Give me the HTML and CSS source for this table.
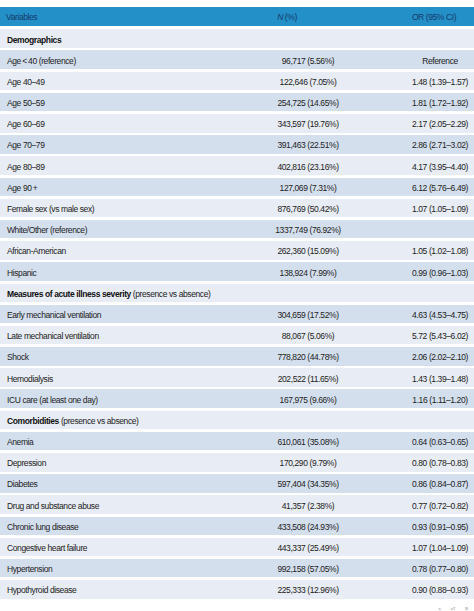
FILE: index.html
```html
<!DOCTYPE html>
<html>
<head>
<meta charset="utf-8">
<link rel="stylesheet" href="styles.css">
</head>
<body>
<div class="tbl">
  <div class="row head">
    <div class="c1">Variables</div>
    <div class="c2"><i>N</i> (%)</div>
    <div class="c3">OR (95% CI)</div>
  </div>
  <div class="row lt"><div class="c1"><b>Demographics</b></div><div class="c2"></div><div class="c3"></div></div>
  <div class="row dk"><div class="c1">Age&thinsp;&lt;&thinsp;40 (reference)</div><div class="c2">96,717 (5.56%)</div><div class="c3">Reference</div></div>
  <div class="row lt"><div class="c1">Age 40–49</div><div class="c2">122,646 (7.05%)</div><div class="c3">1.48 (1.39–1.57)</div></div>
  <div class="row dk"><div class="c1">Age 50–59</div><div class="c2">254,725 (14.65%)</div><div class="c3">1.81 (1.72–1.92)</div></div>
  <div class="row lt"><div class="c1">Age 60–69</div><div class="c2">343,597 (19.76%)</div><div class="c3">2.17 (2.05–2.29)</div></div>
  <div class="row dk"><div class="c1">Age 70–79</div><div class="c2">391,463 (22.51%)</div><div class="c3">2.86 (2.71–3.02)</div></div>
  <div class="row lt"><div class="c1">Age 80–89</div><div class="c2">402,816 (23.16%)</div><div class="c3">4.17 (3.95–4.40)</div></div>
  <div class="row dk"><div class="c1">Age 90&thinsp;+</div><div class="c2">127,069 (7.31%)</div><div class="c3">6.12 (5.76–6.49)</div></div>
  <div class="row lt"><div class="c1">Female sex (vs male sex)</div><div class="c2">876,769 (50.42%)</div><div class="c3">1.07 (1.05–1.09)</div></div>
  <div class="row dk"><div class="c1">White/Other (reference)</div><div class="c2">1337,749 (76.92%)</div><div class="c3"></div></div>
  <div class="row lt"><div class="c1">African-American</div><div class="c2">262,360 (15.09%)</div><div class="c3">1.05 (1.02–1.08)</div></div>
  <div class="row dk"><div class="c1">Hispanic</div><div class="c2">138,924 (7.99%)</div><div class="c3">0.99 (0.96–1.03)</div></div>
  <div class="row lt"><div class="c1"><b>Measures of acute illness severity</b> (presence vs absence)</div><div class="c2"></div><div class="c3"></div></div>
  <div class="row dk"><div class="c1">Early mechanical ventilation</div><div class="c2">304,659 (17.52%)</div><div class="c3">4.63 (4.53–4.75)</div></div>
  <div class="row lt"><div class="c1">Late mechanical ventilation</div><div class="c2">88,067 (5.06%)</div><div class="c3">5.72 (5.43–6.02)</div></div>
  <div class="row dk"><div class="c1">Shock</div><div class="c2">778,820 (44.78%)</div><div class="c3">2.06 (2.02–2.10)</div></div>
  <div class="row lt"><div class="c1">Hemodialysis</div><div class="c2">202,522 (11.65%)</div><div class="c3">1.43 (1.39–1.48)</div></div>
  <div class="row dk"><div class="c1">ICU care (at least one day)</div><div class="c2">167,975 (9.66%)</div><div class="c3">1.16 (1.11–1.20)</div></div>
  <div class="row lt"><div class="c1"><b>Comorbidities</b> (presence vs absence)</div><div class="c2"></div><div class="c3"></div></div>
  <div class="row dk"><div class="c1">Anemia</div><div class="c2">610,061 (35.08%)</div><div class="c3">0.64 (0.63–0.65)</div></div>
  <div class="row lt"><div class="c1">Depression</div><div class="c2">170,290 (9.79%)</div><div class="c3">0.80 (0.78–0.83)</div></div>
  <div class="row dk"><div class="c1">Diabetes</div><div class="c2">597,404 (34.35%)</div><div class="c3">0.86 (0.84–0.87)</div></div>
  <div class="row lt"><div class="c1">Drug and substance abuse</div><div class="c2">41,357 (2.38%)</div><div class="c3">0.77 (0.72–0.82)</div></div>
  <div class="row dk"><div class="c1">Chronic lung disease</div><div class="c2">433,508 (24.93%)</div><div class="c3">0.93 (0.91–0.95)</div></div>
  <div class="row lt"><div class="c1">Congestive heart failure</div><div class="c2">443,337 (25.49%)</div><div class="c3">1.07 (1.04–1.09)</div></div>
  <div class="row dk"><div class="c1">Hypertension</div><div class="c2">992,158 (57.05%)</div><div class="c3">0.78 (0.77–0.80)</div></div>
  <div class="row lt"><div class="c1">Hypothyroid disease</div><div class="c2">225,333 (12.96%)</div><div class="c3">0.90 (0.88–0.93)</div></div>
</div>
<div class="foot"><span>a</span><span>aT</span><span>B</span></div>
</body>
</html>
```
FILE: styles.css
```css
html, body { margin: 0; padding: 0; background: #fff; }
body {
  font-family: "Liberation Sans", Arial, sans-serif;
  font-size: 8.5px;
  letter-spacing: -0.4px;
  color: #222;
}
.tbl {
  display: flex;
  flex-direction: column;
  gap: 2.7px;
  padding-top: 7px;
}
.row {
  display: grid;
  grid-template-columns: 242px 132px 100px;
  height: 18.5px;
  align-items: center;
  padding-top: 2px;
  box-sizing: border-box;
}
.row.head {
  background: #2490c8;
  color: #16396b;
  height: 19px;
  padding-top: 1px;
  margin-bottom: 0.6px;
}
.lt { background: #e8ecf4; }
.dk { background: #d4dfee; }
.c1, .c2, .c3 { white-space: nowrap; }
.c1 { padding-left: 7px; }
.c2 { text-align: center; }
.c3 { text-align: center; padding-left: 32px; }
.head .c1 { padding-left: 6px; }
.head .c2 { padding-right: 42px; }
.head .c3 { padding-left: 20px; }
b { font-weight: bold; color: #111; }
.foot {
  display: flex;
  justify-content: flex-end;
  gap: 10px;
  padding: 7px 6px 0 0;
  font-size: 4px;
  letter-spacing: 0;
  color: #888;
}
```
